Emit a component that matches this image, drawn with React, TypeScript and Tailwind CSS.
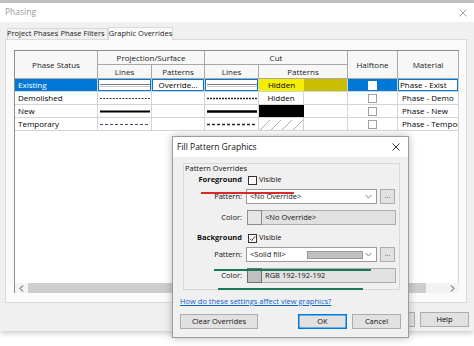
import React from "react";

const cols = "grid-cols-[83px_54px_53px_54px_89px_50px_61px]";

function CloseIcon({ color }: { color: string }) {
  return (
    <svg width="8" height="8" viewBox="0 0 8 8">
      <path d="M0.5 0.5 L7.5 7.5 M7.5 0.5 L0.5 7.5" stroke={color} strokeWidth="0.9" />
    </svg>
  );
}

function LineSample({ kind, cut }: { kind: string; cut?: boolean }) {
  const w = 50;
  if (kind === "existing") {
    return (
      <svg width={w} height="13">
        <line x1="0" y1="5.5" x2={w} y2="5.5" stroke="#7a7a7a" strokeWidth="1" />
        <line x1="0" y1="7.5" x2={w} y2="7.5" stroke="#c8c8c8" strokeWidth="1" />
      </svg>
    );
  }
  if (kind === "demolished") {
    return (
      <svg width={w} height="13">
        <line x1="0" y1="6.5" x2={w} y2="6.5" stroke="#222" strokeWidth={cut ? 1.5 : 0.9} strokeDasharray={cut ? "2 1" : "2 1.2"} />
      </svg>
    );
  }
  if (kind === "new") {
    return (
      <svg width={w} height="13">
        <line x1="0" y1="6.5" x2={w} y2="6.5" stroke="#000" strokeWidth={cut ? 2.4 : 2} />
      </svg>
    );
  }
  return (
    <svg width={w} height="13">
      <line x1="0" y1="6.5" x2={w} y2="6.5" stroke={cut ? "#222" : "#44506a"} strokeWidth={cut ? 1.5 : 1} strokeDasharray="3 2" />
    </svg>
  );
}

function CheckBox({ checked, dark }: { checked?: boolean; dark?: boolean }) {
  return (
    <div
      className={`w-[9px] h-[9px] bg-white border flex items-center justify-center ${
        dark ? "border-[#333]" : "border-[#a0a0a0]"
      }`}
    >
      {checked && (
        <svg width="7" height="7" viewBox="0 0 7 7">
          <path d="M0.8 3.6 L2.7 5.5 L6.2 1.2" stroke="#222" strokeWidth="0.9" fill="none" />
        </svg>
      )}
    </div>
  );
}

function Chevron() {
  return (
    <svg width="7" height="5" viewBox="0 0 7 5">
      <path d="M0.5 1 L3.5 4 L6.5 1" stroke="#666" strokeWidth="0.8" fill="none" />
    </svg>
  );
}

const hd = "border-r border-b border-[#a8a8a8] bg-[#f7f7f7] flex items-center justify-center text-[8px] text-[#222]";
const cell = "border-r border-b border-[#d4d4d4] flex items-center";
const sel = "shadow-[inset_0_0_0_1px_#0078d7]";

function Grid() {
  return (
    <div className="w-[445px] h-[243px] bg-white border-l border-t border-[#8c8c8c] flex flex-col">
      <div className={`grid ${cols} grid-rows-[14px_14px_13px_13px_13px_13px] text-[8px]`}>
        <div className={`${hd} row-span-2`}>Phase Status</div>
        <div className={`${hd} col-span-2`}>Projection/Surface</div>
        <div className={`${hd} col-span-2`}>Cut</div>
        <div className={`${hd} row-span-2`}>Halftone</div>
        <div className={`${hd} row-span-2`}>Material</div>
        <div className={hd}>Lines</div>
        <div className={hd}>Patterns</div>
        <div className={hd}>Lines</div>
        <div className={hd}>Patterns</div>

        {/* Existing */}
        <div className={`${cell} bg-[#0078d7] text-white pl-[3px]`}>Existing</div>
        <div className={`${cell} ${sel} justify-center`}><LineSample kind="existing" /></div>
        <div className={`${cell} ${sel} justify-center`}>Override...</div>
        <div className={`${cell} ${sel} justify-center`}><LineSample kind="existing" cut /></div>
        <div className={`${cell} p-0`}>
          <div className="w-[45px] h-full bg-[#f4ee00] flex items-center justify-center">Hidden</div>
          <div className="flex-1 h-full bg-[#c9bd00]" />
        </div>
        <div className={`${cell} bg-[#0078d7] justify-center`}>
          <div className="w-[9px] h-[9px] bg-white" />
        </div>
        <div className={`${cell} ${sel} pl-[2px] whitespace-nowrap overflow-hidden`}>Phase - Exist</div>

        {/* Demolished */}
        <div className={`${cell} pl-[3px]`}>Demolished</div>
        <div className={`${cell} justify-center`}><LineSample kind="demolished" /></div>
        <div className={cell} />
        <div className={`${cell} justify-center`}><LineSample kind="demolished" cut /></div>
        <div className={cell}>
          <div className="w-[45px] h-full border-r border-[#d4d4d4] flex items-center justify-center">Hidden</div>
        </div>
        <div className={`${cell} justify-center`}><CheckBox /></div>
        <div className={`${cell} pl-[4px] whitespace-nowrap overflow-hidden`}>Phase - Demo</div>

        {/* New */}
        <div className={`${cell} pl-[3px]`}>New</div>
        <div className={`${cell} justify-center`}><LineSample kind="new" /></div>
        <div className={cell} />
        <div className={`${cell} justify-center`}><LineSample kind="new" cut /></div>
        <div className={cell}>
          <div className="w-[45px] h-full bg-black" />
        </div>
        <div className={`${cell} justify-center`}><CheckBox /></div>
        <div className={`${cell} pl-[4px] whitespace-nowrap overflow-hidden`}>Phase - New</div>

        {/* Temporary */}
        <div className={`${cell} pl-[3px]`}>Temporary</div>
        <div className={`${cell} justify-center`}><LineSample kind="temporary" /></div>
        <div className={cell} />
        <div className={`${cell} justify-center`}><LineSample kind="temporary" cut /></div>
        <div className={cell}>
          <svg width="45" height="12" className="border-r border-[#d4d4d4]">
            <path d="M1 12 L11 2 M12 12 L22 2 M23 12 L33 2 M34 12 L44 2" stroke="#777" strokeWidth="0.6" />
          </svg>
        </div>
        <div className={`${cell} justify-center`}><CheckBox /></div>
        <div className={`${cell} pl-[4px] whitespace-nowrap overflow-hidden`}>Phase - Tempor</div>
      </div>
      <div className="flex-1 border-r border-[#d4d4d4]" />
      <div className="h-[10px] bg-[#f3f3f3] flex items-center text-[#555]">
        <div className="w-[13px] flex justify-center">
          <svg width="5" height="7" viewBox="0 0 5 7"><path d="M4 0.5 L1 3.5 L4 6.5" stroke="#444" strokeWidth="1" fill="none" /></svg>
        </div>
        <div className="w-[398px] h-full bg-[#cdcdcd]" />
        <div className="flex-1 flex justify-end pr-[4px]">
          <svg width="5" height="7" viewBox="0 0 5 7"><path d="M1 0.5 L4 3.5 L1 6.5" stroke="#444" strokeWidth="1" fill="none" /></svg>
        </div>
      </div>
    </div>
  );
}

function WinButton({ label, w, primary }: { label: string; w: string; primary?: boolean }) {
  return (
    <div
      className={`${w} h-[15px] bg-[#e1e1e1] border flex items-center justify-center text-[7.5px] ${
        primary ? "border-[#0078d7] shadow-[inset_0_0_0_0.5px_#0078d7]" : "border-[#adadad]"
      }`}
    >
      {label}
    </div>
  );
}

function FillDialog() {
  return (
    <div className="absolute left-[172px] top-[136px] w-[237px] h-[202px] border border-[#9c9c9c] bg-[#f0f0f0] shadow-[0_0_8px_rgba(0,0,0,0.28)] flex flex-col">
      <div className="h-[20px] bg-white flex items-center justify-between pl-[4px] pr-[8px]">
        <span className="text-[8.5px] text-[#111]">Fill Pattern Graphics</span>
        <CloseIcon color="#222" />
      </div>
      <div className="flex-1 flex flex-col px-[7px] text-[7.5px] text-[#111]">
        <div className="ml-[3px] mr-[1px] mt-[6px] border border-[#d8d8d8] flex flex-col pb-[6px]">
          <div className="h-[8px] leading-[8px] pl-[1px] text-[7.5px]">Pattern Overrides</div>
          <div className="mt-[2px] h-[12px] flex items-center">
            <div className="w-[58px] text-right font-bold">Foreground</div>
            <div className="ml-[6px]"><CheckBox dark /></div>
            <span className="ml-[2px]">Visible</span>
          </div>
          <div className="mt-[3px] h-[15px] flex items-center">
            <div className="w-[58px] text-right">Pattern:</div>
            <div className="ml-[4px] w-[131px] h-full bg-white border border-[#9a9a9a] flex items-center pl-[3px] pr-[4px]">
              <span className="flex-1">&lt;No Override&gt;</span>
              <Chevron />
            </div>
            <div className="ml-[3px] w-[15px] h-full bg-[#e1e1e1] border border-[#adadad] flex items-center justify-center text-[7px] text-[#555]">...</div>
          </div>
          <div className="mt-[6px] h-[15px] flex items-center">
            <div className="w-[58px] text-right">Color:</div>
            <div className="ml-[5px] w-[15px] h-full border border-[#8c8c8c] bg-[#e6e6e6]" />
            <div className="w-[134px] h-full bg-[#e1e1e1] border border-l-0 border-[#adadad] flex items-center pl-[3px]">
              &lt;No Override&gt;
            </div>
          </div>
          <div className="mt-[7px] h-[12px] flex items-center">
            <div className="w-[58px] text-right font-bold">Background</div>
            <div className="ml-[6px]"><CheckBox dark checked /></div>
            <span className="ml-[2px]">Visible</span>
          </div>
          <div className="mt-[3px] h-[15px] flex items-center">
            <div className="w-[58px] text-right">Pattern:</div>
            <div className="ml-[4px] w-[131px] h-full bg-white border border-[#9a9a9a] flex items-center pl-[3px] pr-[4px]">
              <span className="w-[57px]">&lt;Solid fill&gt;</span>
              <div className="w-[56px] h-[8px] bg-[#c0c0c0] border border-[#999]" />
              <div className="flex-1 flex justify-end"><Chevron /></div>
            </div>
            <div className="ml-[3px] w-[15px] h-full bg-[#e1e1e1] border border-[#adadad] flex items-center justify-center text-[7px] text-[#555]">...</div>
          </div>
          <div className="mt-[6px] h-[15px] flex items-center">
            <div className="w-[58px] text-right">Color:</div>
            <div className="ml-[5px] w-[15px] h-full border border-[#6e6e6e] bg-[#c0c0c0]" />
            <div className="w-[134px] h-full bg-[#e1e1e1] border border-l-0 border-[#adadad] flex items-center pl-[3px]">
              RGB 192-192-192
            </div>
          </div>
        </div>
        <div className="mt-[6px] h-[10px] leading-[10px] text-[#0a64c8] underline text-[7.5px]">
          How do these settings affect view graphics?
        </div>
        <div className="mt-[8px] flex items-center">
          <WinButton label="Clear Overrides" w="w-[78px]" />
          <div className="flex-1" />
          <WinButton label="OK" w="w-[49px]" primary />
          <div className="w-[5px]" />
          <WinButton label="Cancel" w="w-[49px]" />
        </div>
      </div>

      {/* annotation marks */}
      <div className="absolute left-[28px] top-[55px] w-[93px] h-[2px] bg-[#d42a2a]" />
      <div className="absolute left-[41px] top-[132px] w-[157px] h-[2px] bg-[#177a52]" />
      <div className="absolute left-[45px] top-[151px] w-[145px] h-[2px] bg-[#177a52]" />
    </div>
  );
}

export default function App() {
  return (
    <div className="relative w-[474px] h-[346px] overflow-hidden bg-white text-black font-['Segoe_UI','Open_Sans',sans-serif]">
      <div className="h-[3px] bg-[#c4c4c4]" />
      <div className="h-[328px] flex flex-col shadow-[0_2px_6px_rgba(0,0,0,0.22)]">
        <div className="h-[19px] bg-white flex items-center justify-between pl-[5px] pr-[7px]">
          <span className="text-[8.5px] text-[#9a9a9a]">Phasing</span>
          <CloseIcon color="#9a9a9a" />
        </div>
        <div className="flex-1 bg-[#f0f0f0] flex flex-col pl-[5px] pr-[5px]">
          <div className="mt-[5px] h-[12px] flex items-end pl-[2px] text-[7.5px] text-[#222] whitespace-nowrap">
            <div className="w-[51px] h-[11px] border border-b-0 border-[#d9d9d9] flex items-center justify-center">Project Phases</div>
            <div className="w-[50px] h-[11px] border border-b-0 border-l-0 border-[#d9d9d9] flex items-center justify-center">Phase Filters</div>
            <div className="w-[65px] h-[13px] -mb-[1px] bg-[#fafafa] border border-b-0 border-[#d9d9d9] flex items-center justify-center relative">Graphic Overrides</div>
          </div>
          <div className="w-[462px] h-[264px] bg-[#fafafa] border border-[#dadada] pt-[10px] pl-[8px]">
            <Grid />
          </div>
          <div className="mt-[9px] flex justify-end gap-[5px]">
            <WinButton label="" w="w-[49px]" />
            <WinButton label="Help" w="w-[49px]" />
          </div>
        </div>
      </div>
      <FillDialog />
    </div>
  );
}
